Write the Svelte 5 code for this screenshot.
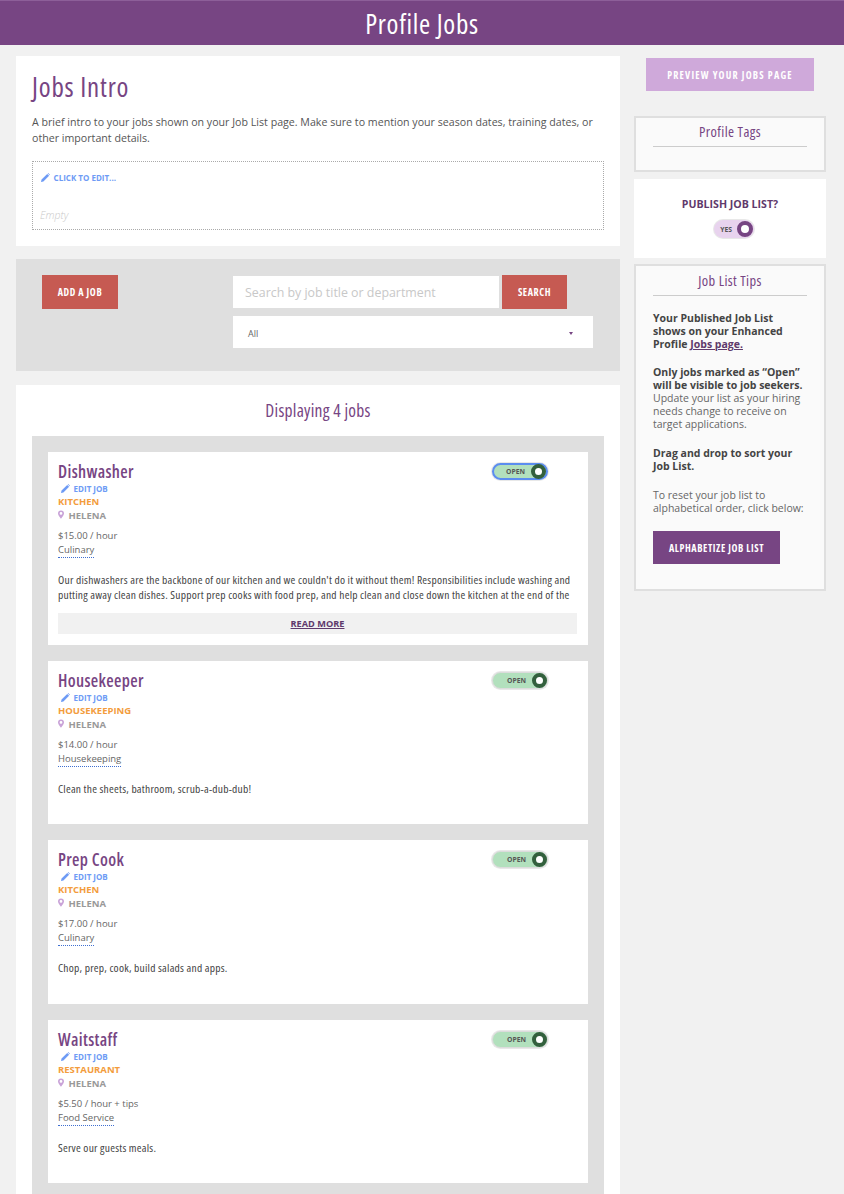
<script>
  const jobs = [
    {
      title: 'Dishwasher', dept: 'KITCHEN', pay: '$15.00 / hour', category: 'Culinary', focused: true, more: true,
      text: "Our dishwashers are the backbone of our kitchen and we couldn't do it without them! Responsibilities include washing and putting away clean dishes. Support prep cooks with food prep, and help clean and close down the kitchen at the end of the"
    },
    { title: 'Housekeeper', dept: 'HOUSEKEEPING', pay: '$14.00 / hour', category: 'Housekeeping', text: 'Clean the sheets, bathroom, scrub-a-dub-dub!' },
    { title: 'Prep Cook', dept: 'KITCHEN', pay: '$17.00 / hour', category: 'Culinary', text: 'Chop, prep, cook, build salads and apps.' },
    { title: 'Waitstaff', dept: 'RESTAURANT', pay: '$5.50 / hour + tips', category: 'Food Service', text: 'Serve our guests meals.' }
  ];
</script>

{#snippet pencil()}
  <svg class="pencil" viewBox="0 0 12 12" width="9" height="9"><path d="M0 12l.7-3.2L8.300 1.200l2.500 2.500-7.600 7.600zM9 .5l.6-.5L12 2.400l-.5.6z" fill="currentColor"/></svg>
{/snippet}

<header class="topbar"><h1>Profile Jobs</h1></header>

<div class="page">
  <main class="main">
    <section class="intro">
      <h2>Jobs Intro</h2>
      <p>A brief intro to your jobs shown on your Job List page. Make sure to mention your season dates, training dates, or other important details.</p>
      <div class="editor">
        <div class="edit-link">{@render pencil()} CLICK TO EDIT...</div>
        <div class="empty">Empty</div>
      </div>
    </section>

    <section class="toolbar">
      <button class="btn red add">ADD A JOB</button>
      <div class="filters">
        <div class="search-row">
          <input class="search" placeholder="Search by job title or department" />
          <button class="btn red search-btn">SEARCH</button>
        </div>
        <div class="select"><span>All</span><i class="caret"></i></div>
      </div>
    </section>

    <section class="listing">
      <h3>Displaying 4 jobs</h3>
      <div class="jobs">
        {#each jobs as job}
          <article class="job" class:short={!job.more}>
            <div class="job-head">
              <div>
                <h4>{job.title}</h4>
                <div class="edit-link job-edit">{@render pencil()} EDIT JOB</div>
                <div class="dept">{job.dept}</div>
                <div class="place">
                  <svg viewBox="0 0 8 11" width="6" height="9"><path fill-rule="evenodd" d="M4 0a4 4 0 0 1 4 4c0 2.500-4 7-4 7S0 6.500 0 4a4 4 0 0 1 4-4zm0 2.200a1.800 1.800 0 1 0 0 3.600 1.800 1.800 0 0 0 0-3.600z" fill="#c9a3d8"/></svg>
                  HELENA
                </div>
              </div>
              <div class="toggle open" class:focused={job.focused}><span>OPEN</span><b></b></div>
            </div>
            <div class="pay">{job.pay}</div>
            <div class="category"><span>{job.category}</span></div>
            <p class="desc">{job.text}</p>
            {#if job.more}<div class="more"><a href="#more">READ MORE</a></div>{/if}
          </article>
        {/each}
      </div>
    </section>
  </main>

  <aside class="side">
    <div class="preview-wrap"><button class="btn preview">PREVIEW YOUR JOBS PAGE</button></div>
    <div class="box tags"><h5>Profile Tags</h5></div>
    <div class="publish">
      <strong>PUBLISH JOB LIST?</strong>
      <div class="toggle yes"><span>YES</span><b></b></div>
    </div>
    <div class="box tips">
      <h5>Job List Tips</h5>
      <p class="b">Your Published Job List shows on your Enhanced Profile <a href="#jobs">Jobs page.</a></p>
      <p><span class="b">Only jobs marked as “Open” will be visible to job seekers.</span> Update your list as your hiring needs change to receive on target applications.</p>
      <p class="b">Drag and drop to sort your Job List.</p>
      <p>To reset your job list to alphabetical order, click below:</p>
      <button class="btn purple">ALPHABETIZE JOB LIST</button>
    </div>
  </aside>
</div>

<style>
  :global(body) {
    margin: 0;
    background: #f1f1f1;
    font-family: "Open Sans", "Liberation Sans", sans-serif;
    color: #666;
  }
  h1, h2, h3, h4, h5, .btn {
    font-family: "Open Sans", sans-serif;
    font-stretch: 75%;
    font-weight: 500;
    margin: 0;
  }
  .topbar {
    background: #774583;
    height: 44px;
    border-top: 1px solid #8d5f99;
    display: flex;
    align-items: center;
    justify-content: center;
  }
  .topbar h1 {
    color: #fff;
    font-size: 27px;
    letter-spacing: 0.7px;
  }
  .page {
    display: flex;
    gap: 14px;
    padding: 11px 18px 0 16px;
    align-items: flex-start;
  }
  .main {
    width: 604px;
    flex: none;
  }
  .side {
    width: 192px;
    flex: none;
  }
  .intro {
    background: #fff;
    padding: 16px;
    height: 190px;
    box-sizing: border-box;
    margin-bottom: 13px;
  }
  .intro h2 {
    color: #774583;
    font-size: 27px;
    letter-spacing: 0.8px;
    line-height: 30px;
  }
  .intro p {
    font-size: 10.650px;
    line-height: 16px;
    margin: 12px 0 15px;
    color: #555;
  }
  .editor {
    border: 1px dotted #aaa;
    height: 69px;
    box-sizing: border-box;
    padding: 10px 8px;
  }
  .edit-link {
    color: #6e9bf5;
    font-size: 8px;
    font-weight: 700;
    line-height: 12px;
  }
  .pencil {
    vertical-align: -1px;
    color: #6e9bf5;
    margin-right: 1.500px;
  }
  .empty {
    font-style: italic;
    color: #c9c9c9;
    font-size: 10.500px;
    font-weight: 300;
    margin-top: 24px;
    margin-left: -1px;
  }
  .toolbar {
    background: #dfdfdf;
    height: 112px;
    box-sizing: border-box;
    padding: 16px 27px 0 26px;
    display: flex;
    justify-content: space-between;
    margin-bottom: 14px;
  }
  .btn {
    border: 0;
    color: #fff;
    font-weight: 700;
    cursor: pointer;
    white-space: nowrap;
    padding: 0;
    letter-spacing: 0.6px;
  }
  .red {
    background: #c65a52;
    font-size: 10px;
    height: 34px;
  }
  .add {
    width: 76px;
  }
  .filters {
    width: 360px;
  }
  .search-row {
    display: flex;
    gap: 3px;
    align-items: center;
    margin-bottom: 7px;
  }
  .search {
    width: 266px;
    height: 32px;
    box-sizing: border-box;
    border: 0;
    background: #fff;
    padding: 0 12px;
    font: 12.400px "Open Sans", sans-serif;
  }
  .search::placeholder {
    color: #c8c8c8;
    opacity: 1;
  }
  .search-btn {
    width: 65px;
  }
  .select {
    background: #fff;
    height: 32px;
    display: flex;
    align-items: center;
    justify-content: space-between;
    padding: 2px 20px 0 15px;
    box-sizing: border-box;
    font-size: 9px;
    color: #666;
  }
  .caret {
    border: 2px solid transparent;
    border-top: 3px solid #774583;
    border-bottom: 0;
  }
  .listing {
    background: #fff;
    padding: 0 16px;
  }
  .listing h3 {
    color: #774583;
    font-size: 17.500px;
    letter-spacing: 0.25px;
    text-align: center;
    line-height: 51px;
  }
  .jobs {
    background: #dfdfdf;
    padding: 16px;
    display: flex;
    flex-direction: column;
    gap: 16px;
  }
  .job {
    background: #fff;
    padding: 10px 11px 11px 10px;
  }
  .job.short {
    box-sizing: border-box;
    min-height: 163.300px;
  }
  .job-head {
    display: flex;
    justify-content: space-between;
    padding-right: 29px;
  }
  .job h4 {
    color: #774583;
    font-size: 17px;
    letter-spacing: 0.35px;
    line-height: 20px;
    font-weight: 600;
    margin-bottom: 1px;
  }
  .job-edit {
    padding-left: 3px;
    line-height: 12px;
  }
  .dept {
    color: #f39c3d;
    font-size: 9.500px;
    font-weight: 700;
    line-height: 14px;
  }
  .place {
    color: #999;
    font-size: 9.500px;
    font-weight: 700;
    line-height: 14px;
  }
  .place svg {
    margin-right: 2px;
  }
  .toggle {
    display: flex;
    align-items: center;
    justify-content: flex-end;
    box-sizing: border-box;
    border-radius: 9px;
    font-size: 6.800px;
    font-weight: 700;
    color: #555;
    margin-top: 1px;
    height: 17px;
    box-shadow: 0 0 0 1px #e8e8e8;
  }
  .toggle b {
    width: 15px;
    height: 15px;
    box-sizing: border-box;
    border-radius: 50%;
    border: 4px solid;
    background: #fff;
    margin-left: 6px;
  }
  .open {
    width: 56px;
    background: #b2e0bd;
    border: 1px solid #dcdcdc;
  }
  .open b {
    border-color: #33603d;
  }
  .focused {
    border: 2px solid #5b8df0;
  }
  .yes {
    width: 40px;
    height: 18px;
    margin: 9px 0 0 80px;
    background: #e8d3ee;
    padding-right: 1px;
  }
  .yes b {
    width: 16px;
    height: 16px;
    border-color: #774583;
    margin-left: 5px;
  }
  .pay {
    font-size: 9.500px;
    line-height: 14px;
    margin-top: 6px;
  }
  .category {
    font-size: 9.500px;
    line-height: 14px;
  }
  .category span {
    border-bottom: 1px dotted #3f6fd0;
    display: inline-block;
  }
  .desc {
    font-size: 11.500px;
    font-stretch: 75%;
    letter-spacing: 0.23px;
    line-height: 15px;
    margin: 14px 0 11px;
    color: #444;
  }
  .job.short .desc {
    margin-bottom: 0;
  }
  .more {
    background: #f1f1f1;
    text-align: center;
    height: 21px;
    line-height: 21px;
    font-size: 9.200px;
    font-weight: 700;
  }
  .more a,
  .tips a {
    color: #5f3a6c;
    font-weight: 700;
  }
  .preview-wrap {
    display: flex;
    justify-content: center;
    padding-top: 2px;
    margin-bottom: 25px;
  }
  .preview {
    width: 168px;
    height: 33px;
    background: #cfa9da;
    font-size: 10px;
    letter-spacing: 1.2px;
  }
  .box {
    border: 2px solid #dfdfdf;
    background: #fafafa;
    box-sizing: border-box;
    padding: 0 17px;
  }
  .box h5 {
    color: #774583;
    font-size: 14.500px;
    letter-spacing: 0.4px;
    text-align: center;
    line-height: 29px;
    border-bottom: 1px solid #ccc;
    height: 29px;
  }
  .tags {
    height: 56px;
    margin-bottom: 7px;
  }
  .tags h5 {
    height: 28px;
    line-height: 28px;
  }
  .publish {
    background: #fff;
    height: 79px;
    box-sizing: border-box;
    padding-top: 19px;
    text-align: center;
    margin-bottom: 6px;
  }
  .publish strong {
    color: #5f3a6c;
    font-size: 10.600px;
    display: block;
    line-height: 13px;
  }
  .tips {
    height: 327px;
  }
  .tips p {
    font-size: 10.500px;
    line-height: 13px;
    margin: 0 0 16px;
  }
  .tips p:first-of-type {
    margin: 16px 0 15px;
  }
  .b {
    font-weight: 700;
    color: #444;
  }
  .purple {
    background: #774583;
    font-size: 10px;
    width: 127px;
    height: 33px;
  }
</style>
